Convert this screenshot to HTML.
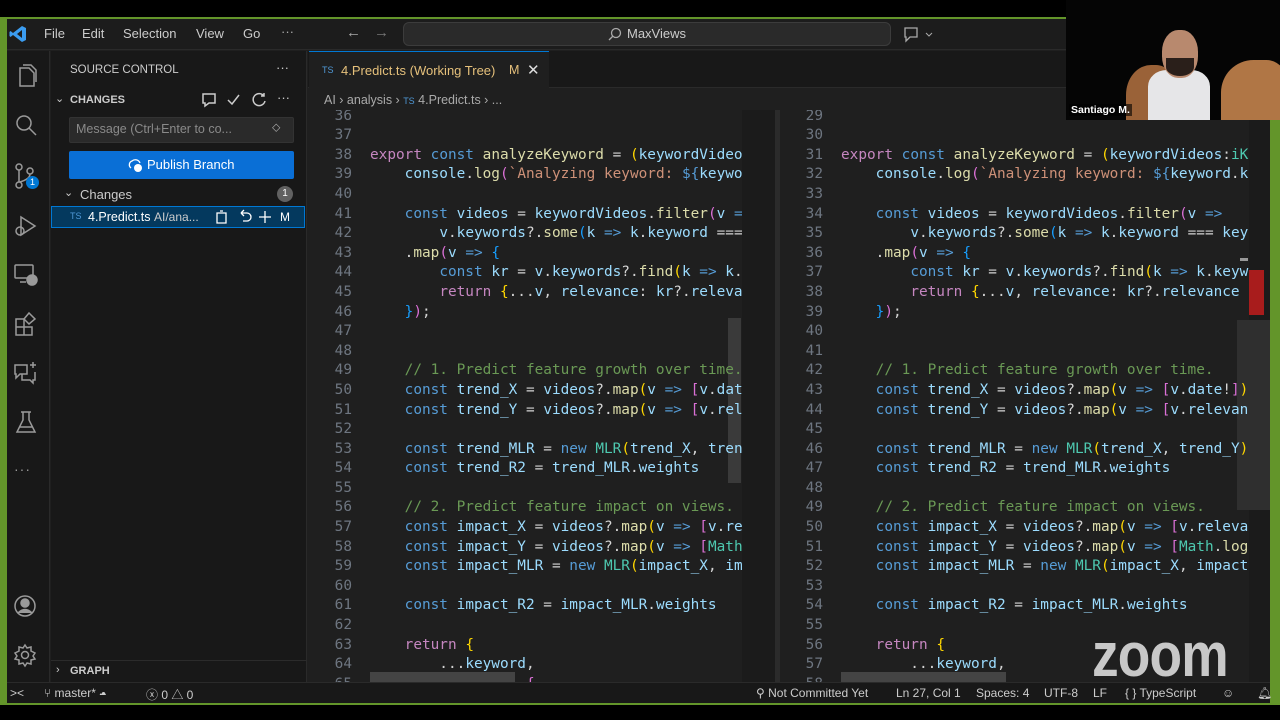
<!DOCTYPE html>
<html><head><meta charset="utf-8"><style>
*{margin:0;padding:0;box-sizing:border-box}
body{width:1280px;height:720px;background:#000;position:relative;overflow:hidden;font-family:"Liberation Sans",sans-serif;color:#ccc}
.a{position:absolute}
.code{font-family:"DejaVu Sans Mono",monospace;font-size:14.4px;white-space:pre;line-height:19.6px;color:#d4d4d4}
.k{color:#569cd6}.v{color:#9cdcfe}.f{color:#dcdcaa}.s{color:#ce9178}.c{color:#6a9955}.r{color:#c586c0}.y{color:#ffd700}.p{color:#da70d6}.b{color:#179fff}.t{color:#4ec9b0}
.ln{color:#6e7681;text-align:right;font-family:"DejaVu Sans Mono",monospace;font-size:14.4px;line-height:19.6px;white-space:pre}
.ic{position:absolute;stroke:#9a9a9a;fill:none;stroke-width:1.5}
.st{font-size:12px;color:#ccc;top:686px}
</style></head><body>
<div class="a" style="left:0;top:17px;width:1280px;height:688px;background:#63952a"></div>
<div class="a" style="left:7px;top:19px;width:1263px;height:684px;background:#1f1f1f"></div>
<div class="a" style="left:7px;top:19px;width:1263px;height:31px;background:#1c1c1c;border-bottom:1px solid #2a2a2a"></div>
<svg class="a" style="left:9px;top:25px" width="18" height="18" viewBox="0 0 18 18"><path d="M13 1 L17 3 V15 L13 17 L4 10 L1.5 12 L0.5 11 V7 L1.5 6 L4 8 L13 1 Z M13 5 L8 9 L13 13 Z" fill="#3b9cf0"/></svg>
<div class="a" style="left:44px;top:26px;font-size:13px;color:#ccc">File</div>
<div class="a" style="left:82px;top:26px;font-size:13px;color:#ccc">Edit</div>
<div class="a" style="left:123px;top:26px;font-size:13px;color:#ccc">Selection</div>
<div class="a" style="left:196px;top:26px;font-size:13px;color:#ccc">View</div>
<div class="a" style="left:243px;top:26px;font-size:13px;color:#ccc">Go</div>
<div class="a" style="left:281px;top:24px;font-size:13px;color:#aaa">···</div>
<div class="a" style="left:346px;top:24px;font-size:15px;color:#aaa">←</div>
<div class="a" style="left:374px;top:24px;font-size:15px;color:#777">→</div>
<div class="a" style="left:403px;top:22px;width:488px;height:24px;background:#2a2a2a;border:1px solid #3c3c3c;border-radius:6px"></div>
<svg class="a" style="left:608px;top:27px" width="14" height="14"><circle cx="8" cy="6" r="4.5" stroke="#aaa" fill="none" stroke-width="1.3"/><path d="M5 9 L1 13" stroke="#aaa" stroke-width="1.3"/></svg>
<div class="a" style="left:627px;top:26px;font-size:13px;color:#ccc">MaxViews</div>
<svg class="a" style="left:903px;top:25px" width="30" height="18"><path d="M2 3 H14 V12 H7 L3 16 V12 H2 Z" stroke="#aaa" fill="none" stroke-width="1.3"/><path d="M23 8 L26 11 L29 8" stroke="#aaa" fill="none"/></svg>

<div class="a" style="left:7px;top:51px;width:43px;height:631px;background:#181818;border-right:1px solid #2a2a2a"></div>
<svg class="ic" style="left:14px;top:63px" width="24" height="26"><path d="M6 5 V23 H20 V10 L15 5 Z M9 2 H17 L22 7 V19"/></svg>
<svg class="ic" style="left:14px;top:114px" width="24" height="24"><circle cx="10" cy="9" r="7"/><path d="M15 14 L22 21"/></svg>
<svg class="ic" style="left:12px;top:162px" width="30" height="30"><circle cx="7" cy="5" r="3"/><circle cx="7" cy="23" r="3"/><circle cx="18" cy="9" r="3"/><path d="M7 8 V20 M18 12 Q18 17 8 20"/></svg>
<div class="a" style="left:26px;top:176px;width:13px;height:13px;border-radius:50%;background:#0078d4;color:#fff;font-size:9px;text-align:center;line-height:13px">1</div>
<svg class="ic" style="left:13px;top:213px" width="26" height="26"><path d="M8 4 L22 13 L8 22 Z"/><circle cx="7" cy="18" r="4"/></svg>
<svg class="ic" style="left:13px;top:262px" width="26" height="26"><rect x="2" y="3" width="18" height="13" rx="1"/><path d="M7 20 H13"/><circle cx="19" cy="18" r="5" fill="#9a9a9a"/></svg>
<svg class="ic" style="left:13px;top:311px" width="26" height="26"><path d="M3 8 H11 V16 H3 Z M3 16 V24 H11 V16 H19 V24 H11 M11 8 V16"/><path d="M16 2 L22 8 L16 13 L11 8 Z"/></svg>
<svg class="ic" style="left:13px;top:360px" width="26" height="26"><path d="M2 5 H14 V14 H7 L3 18 V14 H2 Z M9 14 V20 H17 L20 23 V20 H22 V12"/><path d="M20 2 V8 M17 5 H23"/></svg>
<svg class="ic" style="left:14px;top:410px" width="24" height="26"><path d="M7 2 H17 M9 2 V10 L3 22 H21 L15 10 V2 M5 17 H19"/></svg>
<div class="a" style="left:14px;top:461px;font-size:14px;color:#9a9a9a;letter-spacing:1px">···</div>
<svg class="ic" style="left:13px;top:594px" width="26" height="26"><circle cx="12" cy="12" r="10"/><circle cx="12" cy="9" r="4" fill="#9a9a9a"/><path d="M5 19 Q12 12 19 19" fill="#9a9a9a"/></svg>
<svg class="ic" style="left:13px;top:643px" width="26" height="26"><circle cx="12" cy="12" r="3.5"/><path d="M12 2 L14 5 L18 4 L18 8 L22 10 L20 13 L22 16 L18 17 L18 21 L14 20 L12 23 L10 20 L6 21 L6 17 L2 16 L4 13 L2 10 L6 8 L6 4 L10 5 Z"/></svg>

<div class="a" style="left:51px;top:51px;width:256px;height:631px;background:#181818;border-right:1px solid #2a2a2a"></div>
<div class="a" style="left:70px;top:64px;font-size:11.5px;color:#ccc">SOURCE CONTROL</div>
<div class="a" style="left:276px;top:60px;font-size:13px;color:#ccc">···</div>
<div class="a" style="left:55px;top:92px;font-size:11px;color:#ccc">&#8964;</div>
<div class="a" style="left:70px;top:94px;font-size:11px;font-weight:bold;color:#ccc">CHANGES</div>
<svg class="ic" style="left:200px;top:91px;stroke:#ccc" width="90" height="18"><path d="M3 3 H15 V12 H9 L5 15 V12 H3 Z"/><path d="M28 9 L32 13 L39 4"/><path d="M64 5 A6 6 0 1 0 65 10 M64 2 V5 H61"/></svg>
<div class="a" style="left:277px;top:90px;font-size:13px;color:#ccc">···</div>
<div class="a" style="left:69px;top:117px;width:225px;height:26px;background:#2a2a2a;border:1px solid #333;border-radius:2px"></div>
<div class="a" style="left:76px;top:122px;font-size:12.5px;color:#8a8a8a">Message (Ctrl+Enter to co...</div>
<div class="a" style="left:272px;top:120px;font-size:12px;color:#aaa">⬦</div>
<div class="a" style="left:69px;top:151px;width:225px;height:28px;background:#0a6fd6;border-radius:2px"></div>
<svg class="a" style="left:127px;top:157px" width="16" height="16"><path d="M4 11 A4 4 0 0 1 5 4 A5 5 0 0 1 13 6" stroke="#fff" fill="none" stroke-width="1.3"/><circle cx="11" cy="11" r="4" fill="#fff"/></svg>
<div class="a" style="left:147px;top:157px;font-size:13px;color:#fff">Publish Branch</div>
<div class="a" style="left:64px;top:186px;font-size:11px;color:#ccc">&#8964;</div>
<div class="a" style="left:80px;top:187px;font-size:13px;color:#ccc">Changes</div>
<div class="a" style="left:277px;top:186px;width:16px;height:16px;border-radius:50%;background:#616161;color:#fff;font-size:10px;text-align:center;line-height:16px">1</div>
<div class="a" style="left:51px;top:206px;width:254px;height:22px;background:#04395e;border:1px solid #0078d4"></div>
<div class="a" style="left:70px;top:211px;font-size:9px;color:#4f98d6">TS</div>
<div class="a" style="left:88px;top:210px;font-size:12.5px;color:#fff">4.Predict.ts <span style="font-size:12px;color:#ccc">AI/ana...</span></div>
<svg class="a" style="left:214px;top:209px;stroke:#fff;fill:none;stroke-width:1.3" width="64" height="16"><path d="M3 4 H12 V14 H3 Z M6 2 H9"/><path d="M27 4 H33 A4 4 0 0 1 33 12 H29 M27 4 L30 1 M27 4 L30 7"/><path d="M51 2 V14 M45 8 H57"/></svg>
<div class="a" style="left:280px;top:210px;font-size:12px;color:#fff">M</div>
<div class="a" style="left:51px;top:660px;width:256px;height:22px;border-top:1px solid #2b2b2b"></div>
<div class="a" style="left:56px;top:664px;font-size:11px;color:#ccc">›</div>
<div class="a" style="left:70px;top:665px;font-size:11px;font-weight:bold;color:#ccc">GRAPH</div>

<div class="a" style="left:308px;top:51px;width:962px;height:37px;background:#181818;border-bottom:1px solid #2a2a2a"></div>
<div class="a" style="left:309px;top:51px;width:240px;height:38px;background:#1f1f1f;border-top:1px solid #0078d4"></div>
<div class="a" style="left:322px;top:65px;font-size:9px;color:#4f98d6">TS</div>
<div class="a" style="left:341px;top:63px;font-size:13px;color:#e5c07b">4.Predict.ts (Working Tree)</div>
<div class="a" style="left:509px;top:63px;font-size:12.5px;color:#e5c07b">M</div>
<div class="a" style="left:527px;top:61px;font-size:15px;color:#ddd">✕</div>
<div class="a" style="left:324px;top:93px;font-size:12.5px;color:#aaa">AI › analysis › <span style="font-size:9px;color:#4f98d6">TS</span> 4.Predict.ts › ...</div>

<div class="a" style="left:775px;top:110px;width:5px;height:572px;background:#2b2b2b"></div>
<div class="a" style="left:742px;top:110px;width:33px;height:572px;background:#1b1b1b"></div>
<div class="a" style="left:728px;top:318px;width:13px;height:165px;background:#3a3a3a"></div>
<div class="a" style="left:1249px;top:110px;width:21px;height:572px;background:#1b1b1b"></div>
<div class="a" style="left:1237px;top:320px;width:33px;height:190px;background:#2f2f2f"></div>
<div class="a" style="left:1249px;top:270px;width:15px;height:45px;background:#a81c1c"></div>
<div class="a" style="left:1240px;top:258px;width:8px;height:3px;background:#999"></div>

<div class="a" style="left:310px;top:110px;width:432px;height:572px;overflow:hidden">
<div class="a ln" style="left:0;top:-3.4px;width:42px">36
37
38
39
40
41
42
43
44
45
46
47
48
49
50
51
52
53
54
55
56
57
58
59
60
61
62
63
64
65</div>
<div class="a code" style="left:60px;top:-3.4px"><span> </span>
<span> </span>
<span class="r">export</span> <span class="k">const</span> <span class="f">analyzeKeyword</span> = <span class="y">(</span><span class="v">keywordVideos</span>:<span class="t">iKeyword</span>
    <span class="v">console</span>.<span class="f">log</span><span class="p">(</span><span class="s">`Analyzing keyword: </span><span class="k">${</span><span class="v">keyword</span>.<span class="v">k</span>
 
    <span class="k">const</span> <span class="v">videos</span> = <span class="v">keywordVideos</span>.<span class="f">filter</span><span class="p">(</span><span class="v">v</span> <span class="k">=&gt;</span>
        <span class="v">v</span>.<span class="v">keywords</span>?.<span class="f">some</span><span class="b">(</span><span class="v">k</span> <span class="k">=&gt;</span> <span class="v">k</span>.<span class="v">keyword</span> === <span class="v">key</span>
    .<span class="f">map</span><span class="p">(</span><span class="v">v</span> <span class="k">=&gt;</span> <span class="b">{</span>
        <span class="k">const</span> <span class="v">kr</span> = <span class="v">v</span>.<span class="v">keywords</span>?.<span class="f">find</span><span class="y">(</span><span class="v">k</span> <span class="k">=&gt;</span> <span class="v">k</span>.<span class="v">keyw</span>
        <span class="r">return</span> <span class="y">{</span>...<span class="v">v</span>, <span class="v">relevance</span>: <span class="v">kr</span>?.<span class="v">relevance</span>
    <span class="b">}</span><span class="p">)</span>;
 
 
    <span class="c">// 1. Predict feature growth over time.</span>
    <span class="k">const</span> <span class="v">trend_X</span> = <span class="v">videos</span>?.<span class="f">map</span><span class="y">(</span><span class="v">v</span> <span class="k">=&gt;</span> <span class="p">[</span><span class="v">v</span>.<span class="v">date</span>!<span class="p">]</span><span class="y">)</span>
    <span class="k">const</span> <span class="v">trend_Y</span> = <span class="v">videos</span>?.<span class="f">map</span><span class="y">(</span><span class="v">v</span> <span class="k">=&gt;</span> <span class="p">[</span><span class="v">v</span>.<span class="v">relevance</span>
 
    <span class="k">const</span> <span class="v">trend_MLR</span> = <span class="k">new</span> <span class="t">MLR</span><span class="y">(</span><span class="v">trend_X</span>, <span class="v">trend_Y</span><span class="y">)</span>
    <span class="k">const</span> <span class="v">trend_R2</span> = <span class="v">trend_MLR</span>.<span class="v">weights</span>
 
    <span class="c">// 2. Predict feature impact on views.</span>
    <span class="k">const</span> <span class="v">impact_X</span> = <span class="v">videos</span>?.<span class="f">map</span><span class="y">(</span><span class="v">v</span> <span class="k">=&gt;</span> <span class="p">[</span><span class="v">v</span>.<span class="v">relevance</span>
    <span class="k">const</span> <span class="v">impact_Y</span> = <span class="v">videos</span>?.<span class="f">map</span><span class="y">(</span><span class="v">v</span> <span class="k">=&gt;</span> <span class="p">[</span><span class="t">Math</span>.<span class="f">log</span>
    <span class="k">const</span> <span class="v">impact_MLR</span> = <span class="k">new</span> <span class="t">MLR</span><span class="y">(</span><span class="v">impact_X</span>, <span class="v">impact</span>
 
    <span class="k">const</span> <span class="v">impact_R2</span> = <span class="v">impact_MLR</span>.<span class="v">weights</span>
 
    <span class="r">return</span> <span class="y">{</span>
        ...<span class="v">keyword</span>,
        <span class="v">analysis</span>: <span class="p">{</span></div>
<div class="a" style="left:60px;top:562px;width:145px;height:10px;background:#444"></div>
</div>

<div class="a" style="left:781px;top:110px;width:468px;height:572px;overflow:hidden">
<div class="a ln" style="left:0;top:-3.4px;width:42px">29
30
31
32
33
34
35
36
37
38
39
40
41
42
43
44
45
46
47
48
49
50
51
52
53
54
55
56
57
58</div>
<div class="a code" style="left:60px;top:-3.4px"><span> </span>
<span> </span>
<span class="r">export</span> <span class="k">const</span> <span class="f">analyzeKeyword</span> = <span class="y">(</span><span class="v">keywordVideos</span>:<span class="t">iKeyword</span>
    <span class="v">console</span>.<span class="f">log</span><span class="p">(</span><span class="s">`Analyzing keyword: </span><span class="k">${</span><span class="v">keyword</span>.<span class="v">k</span>
 
    <span class="k">const</span> <span class="v">videos</span> = <span class="v">keywordVideos</span>.<span class="f">filter</span><span class="p">(</span><span class="v">v</span> <span class="k">=&gt;</span>
        <span class="v">v</span>.<span class="v">keywords</span>?.<span class="f">some</span><span class="b">(</span><span class="v">k</span> <span class="k">=&gt;</span> <span class="v">k</span>.<span class="v">keyword</span> === <span class="v">key</span>
    .<span class="f">map</span><span class="p">(</span><span class="v">v</span> <span class="k">=&gt;</span> <span class="b">{</span>
        <span class="k">const</span> <span class="v">kr</span> = <span class="v">v</span>.<span class="v">keywords</span>?.<span class="f">find</span><span class="y">(</span><span class="v">k</span> <span class="k">=&gt;</span> <span class="v">k</span>.<span class="v">keyw</span>
        <span class="r">return</span> <span class="y">{</span>...<span class="v">v</span>, <span class="v">relevance</span>: <span class="v">kr</span>?.<span class="v">relevance</span>
    <span class="b">}</span><span class="p">)</span>;
 
 
    <span class="c">// 1. Predict feature growth over time.</span>
    <span class="k">const</span> <span class="v">trend_X</span> = <span class="v">videos</span>?.<span class="f">map</span><span class="y">(</span><span class="v">v</span> <span class="k">=&gt;</span> <span class="p">[</span><span class="v">v</span>.<span class="v">date</span>!<span class="p">]</span><span class="y">)</span>
    <span class="k">const</span> <span class="v">trend_Y</span> = <span class="v">videos</span>?.<span class="f">map</span><span class="y">(</span><span class="v">v</span> <span class="k">=&gt;</span> <span class="p">[</span><span class="v">v</span>.<span class="v">relevance</span>
 
    <span class="k">const</span> <span class="v">trend_MLR</span> = <span class="k">new</span> <span class="t">MLR</span><span class="y">(</span><span class="v">trend_X</span>, <span class="v">trend_Y</span><span class="y">)</span>
    <span class="k">const</span> <span class="v">trend_R2</span> = <span class="v">trend_MLR</span>.<span class="v">weights</span>
 
    <span class="c">// 2. Predict feature impact on views.</span>
    <span class="k">const</span> <span class="v">impact_X</span> = <span class="v">videos</span>?.<span class="f">map</span><span class="y">(</span><span class="v">v</span> <span class="k">=&gt;</span> <span class="p">[</span><span class="v">v</span>.<span class="v">relevance</span>
    <span class="k">const</span> <span class="v">impact_Y</span> = <span class="v">videos</span>?.<span class="f">map</span><span class="y">(</span><span class="v">v</span> <span class="k">=&gt;</span> <span class="p">[</span><span class="t">Math</span>.<span class="f">log</span>
    <span class="k">const</span> <span class="v">impact_MLR</span> = <span class="k">new</span> <span class="t">MLR</span><span class="y">(</span><span class="v">impact_X</span>, <span class="v">impact</span>
 
    <span class="k">const</span> <span class="v">impact_R2</span> = <span class="v">impact_MLR</span>.<span class="v">weights</span>
 
    <span class="r">return</span> <span class="y">{</span>
        ...<span class="v">keyword</span>,
        <span class="v">analysis</span>: <span class="p">{</span></div>
<div class="a" style="left:60px;top:562px;width:165px;height:10px;background:#444"></div>
</div>

<div class="a" style="left:1092px;top:625px;font-size:62px;line-height:62px;font-weight:bold;color:#c8c8c8;letter-spacing:-1px;transform:scaleX(0.86);transform-origin:left top">zoom</div>

<div class="a" style="left:7px;top:682px;width:1263px;height:21px;background:#181818;border-top:1px solid #2a2a2a"></div>
<div class="a st" style="left:10px">&gt;&lt;</div>
<div class="a st" style="left:44px">⑂ master* ☁</div>
<div class="a st" style="left:146px">ⓧ 0 △ 0</div>
<div class="a st" style="left:756px">⚲ Not Committed Yet</div>
<div class="a st" style="left:896px">Ln 27, Col 1</div>
<div class="a st" style="left:976px">Spaces: 4</div>
<div class="a st" style="left:1044px">UTF-8</div>
<div class="a st" style="left:1093px">LF</div>
<div class="a st" style="left:1125px">{ } TypeScript</div>
<div class="a st" style="left:1222px">☺</div>
<div class="a st" style="left:1257px">🔔︎</div>

<div class="a" style="left:1066px;top:0;width:214px;height:120px;background:#050505;overflow:hidden">
<div class="a" style="left:60px;top:65px;width:50px;height:60px;background:#9a6238;border-radius:50% 40% 0 0"></div>
<div class="a" style="left:155px;top:60px;width:65px;height:65px;background:#b07645;border-radius:50% 30% 0 0"></div>
<div class="a" style="left:82px;top:70px;width:62px;height:55px;background:#e6e6e8;border-radius:30% 30% 0 0"></div>
<div class="a" style="left:96px;top:30px;width:36px;height:48px;background:#b8896e;border-radius:45%"></div>
<div class="a" style="left:100px;top:58px;width:28px;height:18px;background:#2a1f1a;border-radius:0 0 50% 50%"></div>
<div class="a" style="left:3px;top:104px;font-size:10.5px;color:#fff;background:rgba(0,0,0,.6);padding:0 2px;font-weight:bold">Santiago M.</div>
</div>
</body></html>
